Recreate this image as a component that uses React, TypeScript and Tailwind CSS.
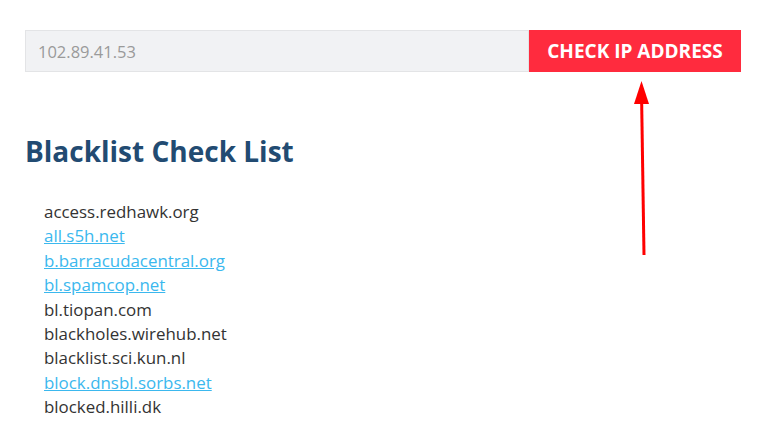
import React from "react";

const hosts: { name: string; link?: boolean }[] = [
  { name: "access.redhawk.org" },
  { name: "all.s5h.net", link: true },
  { name: "b.barracudacentral.org", link: true },
  { name: "bl.spamcop.net", link: true },
  { name: "bl.tiopan.com" },
  { name: "blackholes.wirehub.net" },
  { name: "blacklist.sci.kun.nl" },
  { name: "block.dnsbl.sorbs.net", link: true },
  { name: "blocked.hilli.dk" },
];

export default function App() {
  return (
    <div className="relative h-[423px] w-[768px] overflow-hidden bg-white font-['Open_Sans',sans-serif]">
      <div className="px-[25px] pt-[30px]">
        <form className="flex h-[42px] w-[716px]" onSubmit={(e) => e.preventDefault()}>
          <input
            className="h-full flex-1 border border-[#e3e4e6] bg-[#f1f2f4] px-[12px] text-[16.5px] text-[#9a9a9a] focus:outline-none"
            defaultValue="102.89.41.53"
          />
          <button
            type="submit"
            className="h-full w-[212px] bg-[#ff2b3e] text-[19px] font-bold uppercase text-white"
          >
            Check IP Address
          </button>
        </form>

        <h2 className="mt-[61px] text-[28px] font-bold leading-[36px] text-[#224b72]">
          Blacklist Check List
        </h2>

        <ul className="mt-[31px] pl-[19px] text-[16.9px] leading-[24.4px] text-[#333]">
          {hosts.map((h) => (
            <li key={h.name}>
              {h.link ? (
                <a href="#" className="text-[#3bb8ee] underline">
                  {h.name}
                </a>
              ) : (
                h.name
              )}
            </li>
          ))}
        </ul>
      </div>

      {/* annotation arrow over the page */}
      <svg className="pointer-events-none absolute left-0 top-0" width="768" height="423">
        <line x1="644" y1="255" x2="641.6" y2="98" stroke="#ff0000" strokeWidth="3" />
        <polygon points="641.5,81 649,104 634,104" fill="#ff0000" />
      </svg>
    </div>
  );
}
